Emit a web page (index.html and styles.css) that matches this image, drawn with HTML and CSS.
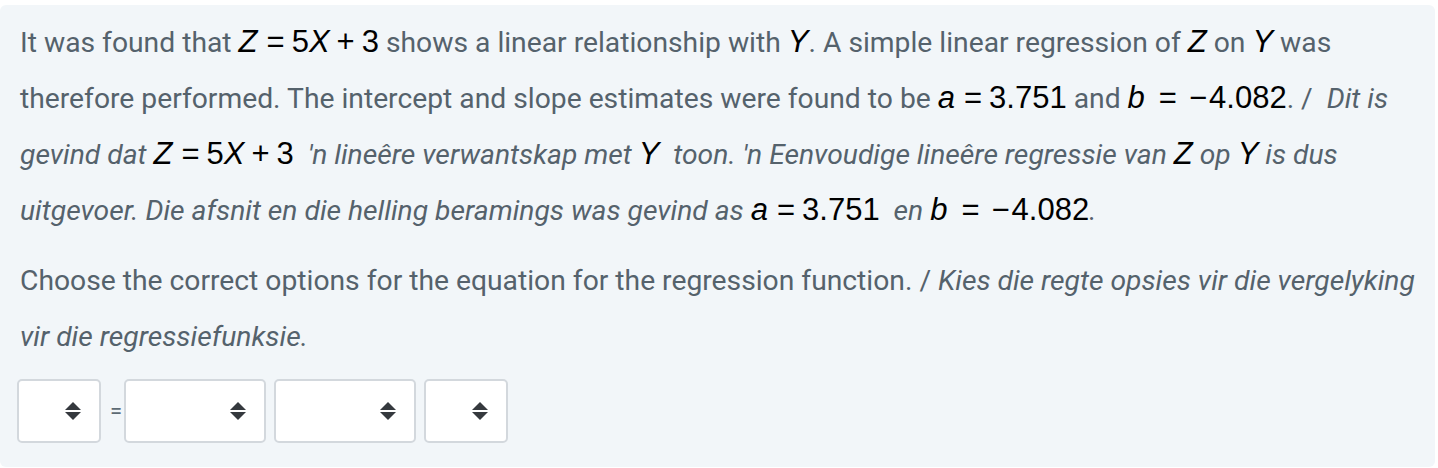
FILE: index.html
```html
<!DOCTYPE html>
<html>
<head>
<meta charset="utf-8">
<link rel="stylesheet" href="styles.css">
</head>
<body>
<div class="card">
  <p class="para">It was found that <span class="m"><i>Z</i><span class="eq">=</span>5<i>X</i><span class="op">+</span>3</span> shows a linear relationship with <span class="m"><i>Y</i></span>. A simple linear regression of <span class="m"><i>Z</i></span> on <span class="m"><i>Y</i></span> was therefore performed. The intercept and slope estimates were found to be <span class="m"><i>a</i><span class="eq">=</span>3.751</span> and <span class="m"><i>b</i><span class="eqw">=</span><span class="neg">&minus;</span>4.082</span>. / <em class="af">&nbsp;Dit is gevind dat <span class="m"><i>Z</i><span class="eq">=</span>5<i>X</i><span class="op">+</span>3</span> &nbsp;'n lineêre verwantskap met <span class="m"><i>Y</i></span> &nbsp;toon. 'n Eenvoudige lineêre regressie van <span class="m"><i>Z</i></span> op <span class="m"><i>Y</i></span> is dus uitgevoer. Die afsnit en die helling beramings was gevind as <span class="m"><i>a</i><span class="eq">=</span>3.751</span> &nbsp;en <span class="m"><i>b</i><span class="eqw">=</span><span class="neg">&minus;</span>4.082</span>.</em></p>
  <p class="para">Choose the correct options for the equation for the regression function. / <em class="af">Kies die regte opsies vir die vergelyking vir die regressiefunksie.</em></p>
  <div class="answer">
    <div class="sel w84"><svg class="arr" width="16" height="18" viewBox="0 0 16 18"><path d="M8 0 L16 8 L0 8 Z M0 10 L16 10 L8 18 Z" fill="#35393e"/></svg></div>
    <span class="equals">=</span>
    <div class="sel w142"><svg class="arr" width="16" height="18" viewBox="0 0 16 18"><path d="M8 0 L16 8 L0 8 Z M0 10 L16 10 L8 18 Z" fill="#35393e"/></svg></div>
    <div class="sel w142"><svg class="arr" width="16" height="18" viewBox="0 0 16 18"><path d="M8 0 L16 8 L0 8 Z M0 10 L16 10 L8 18 Z" fill="#35393e"/></svg></div>
    <div class="sel w84"><svg class="arr" width="16" height="18" viewBox="0 0 16 18"><path d="M8 0 L16 8 L0 8 Z M0 10 L16 10 L8 18 Z" fill="#35393e"/></svg></div>
  </div>
</div>
</body>
</html>
```
FILE: styles.css
```css
html, body { margin: 0; padding: 0; background: #fff; }
body { padding-top: 5px; }
.card {
  width: 1435px;
  box-sizing: border-box;
  background: #f2f6f9;
  border-radius: 6px;
  padding: 10px 20px 24px 20px;
  font-family: Roboto, "Liberation Sans", sans-serif;
  font-size: 28.25px;
  line-height: 56px;
  color: #55626c;
}
.para { margin: 0 0 14px 0; }
.af { font-style: italic; }
.m {
  font-family: "Liberation Sans", Arial, sans-serif;
  font-size: 31px;
  line-height: 1;
  color: #000;
  font-style: normal;
}
.m i { font-style: italic; }
.eq { margin: 0 7px 0 9px; }
.op { margin: 0 7px; }
.eqw { margin: 0 12px 0 14px; }
.neg { margin-right: 2px; }
.answer {
  display: flex;
  align-items: center;
  height: 64px;
  margin-left: -3px;
}
.sel {
  box-sizing: border-box;
  height: 64px;
  background: #fff;
  border: 2px solid #d3d8dd;
  border-radius: 5px;
  display: flex;
  align-items: center;
  justify-content: flex-end;
  padding-right: 18px;
  margin-right: 8px;
}
.w84 { width: 84px; }
.w142 { width: 142px; }
.equals {
  font-size: 22px;
  color: #5d6a74;
  margin: 0 2px 0 1px;
  line-height: 1;
}
```
